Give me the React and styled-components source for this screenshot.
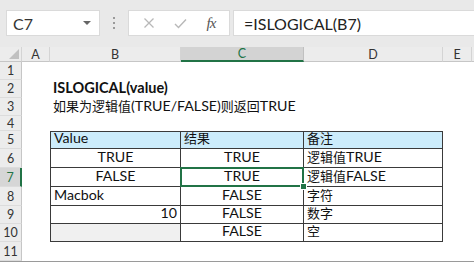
import React from "react";
import styled, { createGlobalStyle, css } from "styled-components";

const GlobalStyle = createGlobalStyle`
  html, body {
    margin: 0;
    padding: 0;
    background: #ffffff;
    overflow: hidden;
  }
  body {
    font-family: Lato, "Noto Sans CJK SC", sans-serif;
  }
`;

const Root = styled.div`
  width: 474px;
  height: 262px;
  display: flex;
  flex-direction: column;
  background: #ffffff;
  overflow: hidden;
`;

const FormulaBar = styled.div`
  height: 47px;
  box-sizing: border-box;
  padding: 10px 0 11px 6px;
  background: #e9e9e9;
  display: flex;
  align-items: stretch;
`;

const NameBox = styled.div`
  width: 94px;
  background: #ffffff;
  border: 1px solid #dadada;
  box-sizing: border-box;
  display: flex;
  align-items: center;
  justify-content: space-between;
  padding: 0 8px 0 6px;
  font-size: 16px;
  color: #333;
`;

const Caret = styled.span`
  width: 0;
  height: 0;
  border-left: 4px solid transparent;
  border-right: 4px solid transparent;
  border-top: 4px solid #666;
`;

const Dots = styled.div`
  width: 28px;
  display: flex;
  flex-direction: column;
  align-items: center;
  justify-content: center;
  gap: 3px;

  span {
    width: 2px;
    height: 2px;
    background: #9a9a9a;
  }
`;

const ButtonBox = styled.div`
  width: 102px;
  background: #ffffff;
  border: 1px solid #dadada;
  box-sizing: border-box;
  display: flex;
  align-items: center;
  justify-content: space-around;
  padding: 0 4px;
`;

const Fx = styled.span`
  font-family: "Liberation Serif", serif;
  font-style: italic;
  font-size: 15px;
  color: #555;
  letter-spacing: -1px;
`;

const FormulaInput = styled.div`
  flex: 1;
  margin-left: 3px;
  background: #ffffff;
  border: 1px solid #dadada;
  border-right: none;
  box-sizing: border-box;
  display: flex;
  align-items: center;
  padding-left: 10px;
  font-size: 16px;
  color: #222;
`;

const Sheet = styled.div`
  display: grid;
  grid-template-columns: 22px 28px 131px 123px 139px 29px 1fr;
  grid-template-rows: 15px 18px 18px 18px 15px 18px 19px 19px 19px 18px 18px 19px 1fr;
  flex: 1;
  font-size: 14.2px;
  color: #111;
`;

const Corner = styled.div`
  background: #ececec;
  border-right: 1px solid #d4d4d4;
  border-bottom: 1px solid #c6c6c6;
  box-sizing: border-box;
  position: relative;

  &::after {
    content: "";
    position: absolute;
    right: 2px;
    bottom: 2px;
    border-left: 10px solid transparent;
    border-bottom: 10px solid #c0c0c0;
  }
`;

const ColHead = styled.div`
  background: ${(p) => (p.$active ? "#d3d3d3" : "#ececec")};
  border-right: 1px solid ${(p) => (p.$active ? "#c0c0c0" : "#d4d4d4")};
  border-bottom: ${(p) => (p.$active ? "2px solid #217346" : "1px solid #c6c6c6")};
  box-sizing: border-box;
  display: flex;
  align-items: center;
  justify-content: center;
  font-size: 12.5px;
  color: ${(p) => (p.$active ? "#217346" : "#333")};
`;

const RowHead = styled.div`
  background: ${(p) => (p.$active ? "#d6d6d6" : "#ececec")};
  border-right: ${(p) => (p.$active ? "2px solid #217346" : "1px solid #c6c6c6")};
  border-bottom: 1px solid #dcdcdc;
  box-sizing: border-box;
  display: flex;
  align-items: center;
  justify-content: center;
  font-size: 12.5px;
  color: ${(p) => (p.$active ? "#217346" : "#333")};
`;

const Cell = styled.div`
  box-sizing: border-box;
  display: flex;
  align-items: flex-end;
  padding: 0 3px 2px;
  white-space: nowrap;
  line-height: 16px;
  position: relative;
  justify-content: ${(p) =>
    p.$align === "center" ? "center" : p.$align === "right" ? "flex-end" : "flex-start"};
  font-weight: ${(p) => (p.$bold ? 700 : 400)};
  font-size: ${(p) => (p.$bold ? "14.5px" : "inherit")};
  background: ${(p) => p.$bg || "transparent"};

  ${(p) =>
    p.$box &&
    css`
      border-right: 1px solid #3a3a3a;
      border-bottom: 1px solid #3a3a3a;
    `}
  ${(p) =>
    p.$left &&
    css`
      border-left: 1px solid #3a3a3a;
    `}
  ${(p) =>
    p.$top &&
    css`
      border-top: 1px solid #3a3a3a;
    `}
  ${(p) =>
    p.$selected &&
    css`
      &::after {
        content: "";
        position: absolute;
        left: -1px;
        top: -1px;
        right: -1px;
        bottom: -1px;
        border: 2px solid #217346;
      }
      &::before {
        content: "";
        position: absolute;
        right: -4px;
        bottom: -4px;
        width: 5px;
        height: 5px;
        background: #217346;
        border: 1px solid #fff;
        z-index: 1;
      }
    `}
`;

// CJK glyphs in the reference are narrower than the Latin text size
const Han = styled.span`
  font-family: "Noto Sans CJK SC", sans-serif;
  font-size: 13px;
`;

const EdgeRow = styled.div`
  grid-column: 1 / -1;
  border-top: 1px solid #9a9a9a;
  background: #ececec;
`;

const columns = ["A", "B", "C", "D", "E"];

const rows = [
  { n: 1, cells: [] },
  { n: 2, cells: [{ col: 1, text: "ISLOGICAL(value)", bold: true }] },
  { n: 3, cells: [{ col: 1, text: "如果为逻辑值(TRUE/FALSE)则返回TRUE" }] },
  { n: 4, cells: [] },
  {
    n: 5,
    table: true,
    top: true,
    bg: "#ccecfb",
    cells: [
      { col: 1, text: "Value" },
      { col: 2, text: "结果" },
      { col: 3, text: "备注" },
    ],
  },
  {
    n: 6,
    table: true,
    cells: [
      { col: 1, text: "TRUE", align: "center" },
      { col: 2, text: "TRUE", align: "center" },
      { col: 3, text: "逻辑值TRUE" },
    ],
  },
  {
    n: 7,
    table: true,
    cells: [
      { col: 1, text: "FALSE", align: "center" },
      { col: 2, text: "TRUE", align: "center", selected: true },
      { col: 3, text: "逻辑值FALSE" },
    ],
  },
  {
    n: 8,
    table: true,
    cells: [
      { col: 1, text: "Macbok" },
      { col: 2, text: "FALSE", align: "center" },
      { col: 3, text: "字符" },
    ],
  },
  {
    n: 9,
    table: true,
    cells: [
      { col: 1, text: "10", align: "right" },
      { col: 2, text: "FALSE", align: "center" },
      { col: 3, text: "数字" },
    ],
  },
  {
    n: 10,
    table: true,
    cells: [
      { col: 1, text: "", bg: "#f0f0f0" },
      { col: 2, text: "FALSE", align: "center" },
      { col: 3, text: "空" },
    ],
  },
  { n: 11, cells: [] },
];

const renderText = (text) => {
  if (!text) return null;
  return text
    .split(/([\u4e00-\u9fff]+)/)
    .filter(Boolean)
    .map((part, i) =>
      /[\u4e00-\u9fff]/.test(part) ? <Han key={i}>{part}</Han> : <span key={i}>{part}</span>
    );
};

const XIcon = () => (
  <svg width="12" height="12" viewBox="0 0 12 12">
    <path d="M1.5 1.5 L10.5 10.5 M10.5 1.5 L1.5 10.5" stroke="#b8b8b8" strokeWidth="1.3" fill="none" />
  </svg>
);

const CheckIcon = () => (
  <svg width="13" height="11" viewBox="0 0 13 11">
    <path d="M1 6 L4.5 9.5 L12 1.5" stroke="#b8b8b8" strokeWidth="1.4" fill="none" />
  </svg>
);

const App = () => {
  return (
    <Root>
      <GlobalStyle />
      <FormulaBar>
        <NameBox>
          C7
          <Caret />
        </NameBox>
        <Dots>
          <span />
          <span />
          <span />
        </Dots>
        <ButtonBox>
          <XIcon />
          <CheckIcon />
          <Fx>fx</Fx>
        </ButtonBox>
        <FormulaInput>=ISLOGICAL(B7)</FormulaInput>
      </FormulaBar>
      <Sheet>
        <Corner />
        {columns.map((c) => (
          <ColHead key={c} $active={c === "C"}>
            {c}
          </ColHead>
        ))}
        <ColHead />
        {rows.map((row) => (
          <React.Fragment key={row.n}>
            <RowHead $active={row.n === 7}>{row.n}</RowHead>
            {[0, 1, 2, 3, 4, 5].map((col) => {
              const cell = row.cells.find((c) => c.col === col);
              const inTable = row.table && col >= 1 && col <= 3;
              return (
                <Cell
                  key={col}
                  $box={inTable}
                  $left={inTable && col === 1}
                  $top={inTable && row.top}
                  $bg={inTable ? cell?.bg || row.bg : undefined}
                  $align={cell?.align}
                  $bold={cell?.bold}
                  $selected={cell?.selected}
                >
                  {renderText(cell?.text)}
                </Cell>
              );
            })}
          </React.Fragment>
        ))}
        <EdgeRow />
      </Sheet>
    </Root>
  );
};

export default App;
